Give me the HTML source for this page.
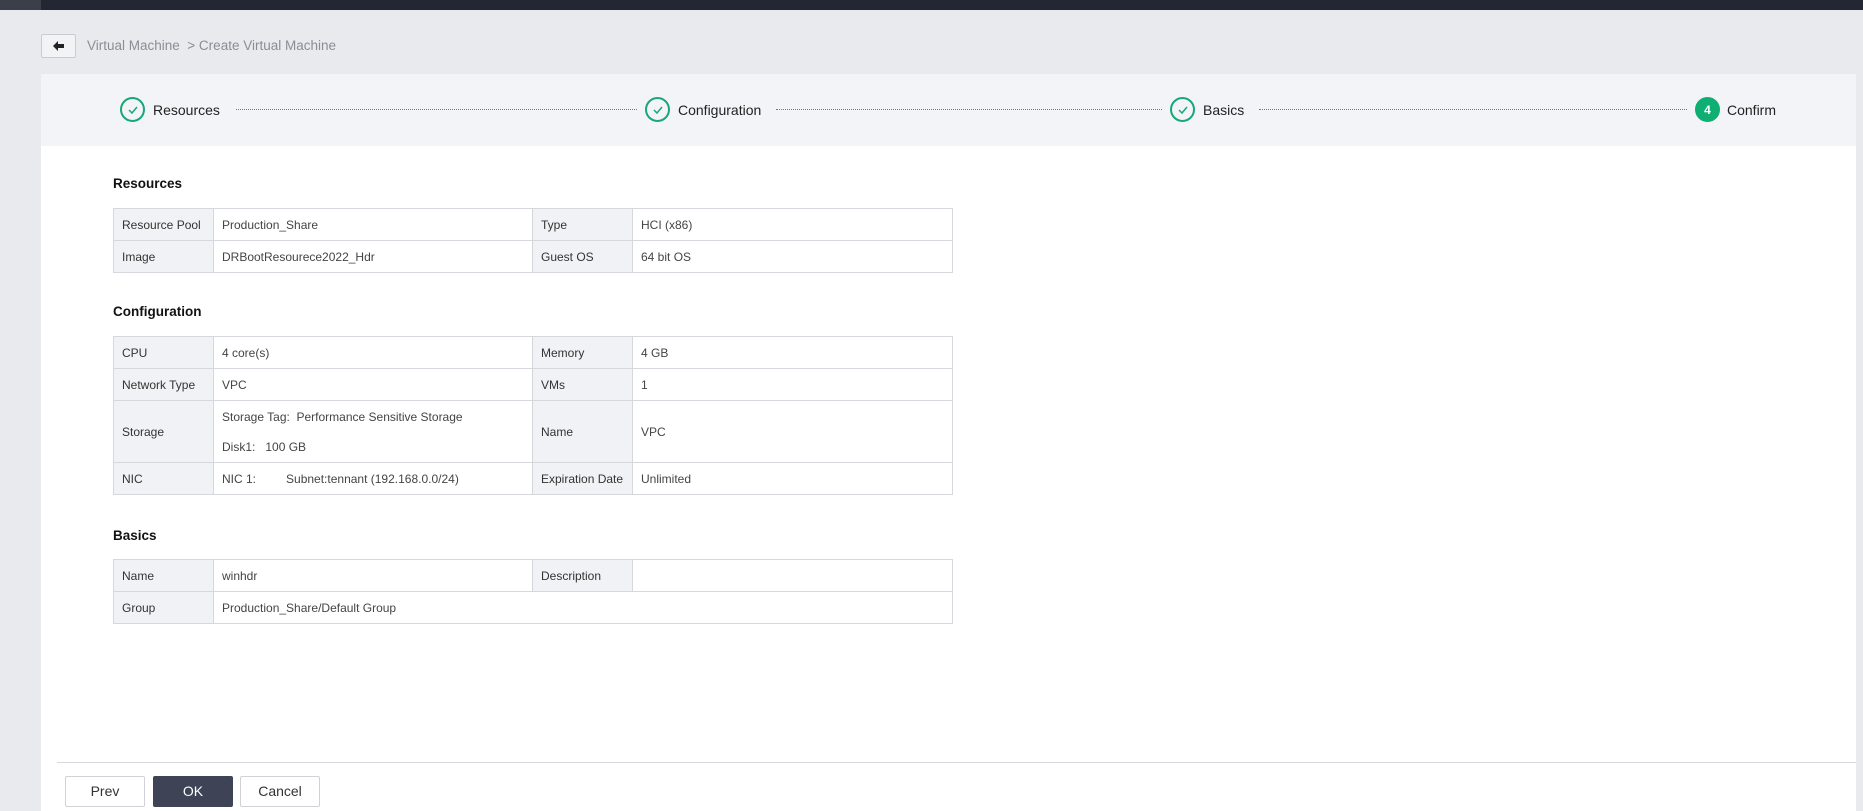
<!DOCTYPE html>
<html><head><meta charset="utf-8"><style>
*{box-sizing:border-box;margin:0;padding:0}
body{width:1863px;height:811px;overflow:hidden;background:#e9eaee;font-family:"Liberation Sans",Arial,sans-serif;position:relative}
.top{position:absolute;left:0;top:0;width:1863px;height:10px;background:#232733}
.top i{position:absolute;left:0;top:0;width:41px;height:10px;background:#3b3f4a}
.back{position:absolute;left:41px;top:34px;width:35px;height:24px;border:1px solid #c9cbd2;background:#f2f3f5;border-radius:2px}
.crumb{position:absolute;left:87px;top:38px;font-size:13.5px;color:#8a8d96}
.panel{position:absolute;left:41px;top:74px;width:1815px;height:737px;background:#fff}
.steps{position:absolute;left:0;top:0;width:100%;height:72px;background:#f3f4f7}
.c{position:absolute;top:23px;width:25px;height:25px;border:2px solid #18a874;border-radius:50%}
.c svg{position:absolute;left:5px;top:5px}
.c.f{background:#0fae73;color:#fff;font-size:12px;font-weight:bold;text-align:center;line-height:22px}
.lbl{position:absolute;top:28px;font-size:14px;color:#222}
.ln{position:absolute;top:35px;border-top:1px dotted #18a874;height:0}
h3{position:absolute;left:72px;font-size:13.5px;font-weight:bold;color:#111}
table{position:absolute;left:72px;width:840px;border-collapse:collapse;font-size:12px;color:#444}
td{border:1px solid #d5d7dd;padding:0 8px;height:32px;white-space:nowrap}
td.l{background:#f1f2f5;color:#333}
.btn{position:absolute;top:702px;height:31px;width:80px;border:1px solid #d0d2d8;background:#fff;font-size:14px;text-align:center;line-height:29px;color:#333;border-radius:2px}
</style></head><body>
<div class="top"><i></i></div>
<div class="back"><svg width="33" height="22" viewBox="0 0 33 22"><path d="M11 11 L16 6 L16 9 L22 9 L22 13 L16 13 L16 16 Z" fill="#222"/></svg></div>
<div class="crumb">Virtual Machine &nbsp;&gt; Create Virtual Machine</div>
<div class="panel">
<div class="steps">
<div class="c" style="left:79px"><svg width="12" height="12"><path d="M2 6 L5 9 L10 3" stroke="#18a874" stroke-width="1.5" fill="none"/></svg></div>
<div class="lbl" style="left:112px">Resources</div>
<div class="ln" style="left:195px;width:401px"></div>
<div class="c" style="left:604px"><svg width="12" height="12"><path d="M2 6 L5 9 L10 3" stroke="#18a874" stroke-width="1.5" fill="none"/></svg></div>
<div class="lbl" style="left:637px">Configuration</div>
<div class="ln" style="left:735px;width:386px"></div>
<div class="c" style="left:1129px"><svg width="12" height="12"><path d="M2 6 L5 9 L10 3" stroke="#18a874" stroke-width="1.5" fill="none"/></svg></div>
<div class="lbl" style="left:1162px">Basics</div>
<div class="ln" style="left:1218px;width:428px"></div>
<div class="c f" style="left:1654px;border-color:#0fae73">4</div>
<div class="lbl" style="left:1686px">Confirm</div>
</div>
<h3 style="top:102px">Resources</h3>
<table style="top:134px">
<tr><td class="l" style="width:100px">Resource Pool</td><td style="width:319px">Production_Share</td><td class="l" style="width:100px">Type</td><td>HCI (x86)</td></tr>
<tr><td class="l">Image</td><td>DRBootResourece2022_Hdr</td><td class="l">Guest OS</td><td>64 bit OS</td></tr>
</table>
<h3 style="top:230px">Configuration</h3>
<table style="top:262px">
<tr><td class="l" style="width:100px">CPU</td><td style="width:319px">4 core(s)</td><td class="l" style="width:100px">Memory</td><td>4 GB</td></tr>
<tr><td class="l">Network Type</td><td>VPC</td><td class="l">VMs</td><td>1</td></tr>
<tr><td class="l" style="height:62px">Storage</td><td style="line-height:30px">Storage Tag:&nbsp; Performance Sensitive Storage<br>Disk1: &nbsp; 100 GB</td><td class="l">Name</td><td>VPC</td></tr>
<tr><td class="l">NIC</td><td>NIC 1: &nbsp; &nbsp; &nbsp; &nbsp; Subnet:tennant (192.168.0.0/24)</td><td class="l">Expiration Date</td><td>Unlimited</td></tr>
</table>
<h3 style="top:454px">Basics</h3>
<table style="top:485px">
<tr><td class="l" style="width:100px">Name</td><td style="width:319px">winhdr</td><td class="l" style="width:100px">Description</td><td></td></tr>
<tr><td class="l">Group</td><td colspan="3">Production_Share/Default Group</td></tr>
</table>
<div style="position:absolute;left:16px;top:688px;width:1799px;border-top:1px solid #d8d9de"></div>
<div class="btn" style="left:24px">Prev</div>
<div class="btn" style="left:112px;background:#3e4355;border-color:#3e4355;color:#fff">OK</div>
<div class="btn" style="left:199px">Cancel</div>
</div>
</body></html>
